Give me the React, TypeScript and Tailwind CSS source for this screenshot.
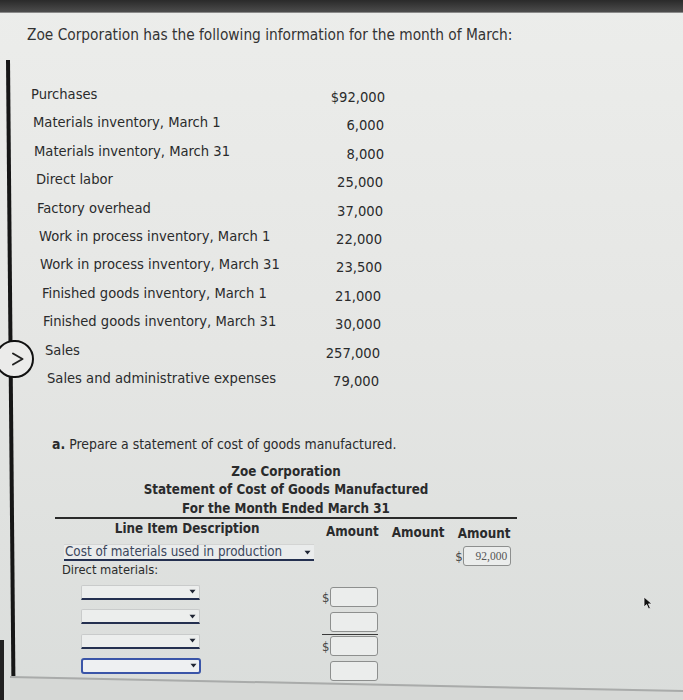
import React from "react";

// values column right edge drifts left a little, labels drift right (photo perspective)
const rows = [
  { label: "Purchases", value: "$92,000", pl: "pl-[31px]", vw: "w-[105px]" },
  { label: "Materials inventory, March 1", value: "6,000", pl: "pl-[33px]", vw: "w-[104px]" },
  { label: "Materials inventory, March 31", value: "8,000", pl: "pl-[34px]", vw: "w-[104px]" },
  { label: "Direct labor", value: "25,000", pl: "pl-[36px]", vw: "w-[103px]" },
  { label: "Factory overhead", value: "37,000", pl: "pl-[37px]", vw: "w-[103px]" },
  { label: "Work in process inventory, March 1", value: "22,000", pl: "pl-[39px]", vw: "w-[102px]" },
  { label: "Work in process inventory, March 31", value: "23,500", pl: "pl-[40px]", vw: "w-[102px]" },
  { label: "Finished goods inventory, March 1", value: "21,000", pl: "pl-[42px]", vw: "w-[101px]" },
  { label: "Finished goods inventory, March 31", value: "30,000", pl: "pl-[43px]", vw: "w-[101px]" },
  { label: "Sales", value: "257,000", pl: "pl-[45px]", vw: "w-[100px]" },
  { label: "Sales and administrative expenses", value: "79,000", pl: "pl-[47px]", vw: "w-[99px]" },
];

function Caret() {
  return (
    <svg width="7" height="5" viewBox="0 0 7 5" className="shrink-0">
      <path d="M0.5 0.8 L6.5 0.8 L3.5 4.4 Z" fill="#1f2533" />
    </svg>
  );
}

function EmptySelect({ focused }: { focused?: boolean }) {
  return (
    <div
      className={
        focused
          ? "flex h-[16px] w-[120px] items-center justify-end rounded-[3px] border-2 border-[#3a55a8] bg-[#eef0f2] pr-[2px]"
          : "flex h-[15px] w-[119px] items-center justify-end rounded-t-[2px] border border-b-2 border-[#c9cbcb] border-b-[#243050] bg-[#eceeed] pr-[3px]"
      }
    >
      <Caret />
    </div>
  );
}

function Box({ children }: { children?: React.ReactNode }) {
  return (
    <div className="flex h-[20px] w-[48px] items-center justify-end rounded-[3px] border-[1.5px] border-[#8d8f8e] bg-[#ebedec] pr-[3px] font-['Liberation_Serif',serif] text-[11.5px] text-[#555]">
      {children}
    </div>
  );
}

function Cursor() {
  return (
    <svg width="12" height="14" viewBox="0 0 12 14" className="absolute left-[643px] top-[596px]">
      <path d="M1 1 L1 11 L3.6 8.6 L5.6 13 L7.4 12.2 L5.5 7.9 L9 7.9 Z" fill="#111" stroke="#eee" strokeWidth="0.8" />
    </svg>
  );
}

export default function App() {
  return (
    <div className="relative h-[700px] w-[683px] overflow-hidden bg-gradient-to-b from-[#ecedeb] via-[#e5e6e4] to-[#dadddb] font-['DejaVu_Sans_Condensed','DejaVu_Sans',sans-serif] text-[#2a2b2c]">
      <div className="h-[13px] border-b border-[#8a8a8a] bg-gradient-to-b from-[#2a2a2a] to-[#4d4d4d]" />

      <p className="mt-[13px] pl-[27px] text-[15.3px] leading-[18px] text-[#333]">
        Zoe Corporation has the following information for the month of March:
      </p>

      <div className="mt-[41px] text-[14.6px]">
        {rows.map((r) => (
          <div key={r.label} className="flex h-[28.4px]">
            <div className={"w-[280px] leading-[17px] " + r.pl}>{r.label}</div>
            <div className={"pt-[3px] text-right leading-[17px] " + r.vw}>{r.value}</div>
          </div>
        ))}
      </div>

      <p className="mt-[39px] pl-[52px] text-[13.9px] leading-[16px]">
        <span className="font-bold">a.</span> Prepare a statement of cost of goods manufactured.
      </p>

      <div className="ml-[55px] mt-[11px] w-[462px] text-[13.3px]">
        <div className="text-center font-bold leading-[18px]">
          <div>Zoe Corporation</div>
          <div>Statement of Cost of Goods Manufactured</div>
          <div className="leading-[16px] pt-[2px]">For the Month Ended March 31</div>
        </div>
        <div className="h-[2px] bg-[#2a2a2a]" />

        <div className="flex pt-[2px] font-bold leading-[16px]">
          <div className="w-[265px] text-center">Line Item Description</div>
          <div className="w-[66px] pt-[3px] text-center">Amount</div>
          <div className="w-[66px] pt-[4px] text-center">Amount</div>
          <div className="w-[66px] pt-[5px] text-center">Amount</div>
        </div>

        <div className="mt-[2px] flex items-start">
          <div className="w-[265px] pl-[9px]">
            <div className="flex h-[17px] w-[250px] items-center justify-between border-t border-b-2 border-[#d3d4d3] border-b-[#243050] bg-[#eaecec] pr-[3px] text-[13.3px] leading-[14px] text-[#3a465c]">
              <span className="pl-[1px]">Cost of materials used in production</span>
              <Caret />
            </div>
          </div>
          <div className="w-[66px]" />
          <div className="w-[66px]" />
          <div className="flex w-[66px] items-center pt-[2px] pl-[4px]">
            <span className="w-[8px] text-[13px] text-[#444]">$</span>
            <Box>92,000</Box>
          </div>
        </div>

        <div className="mt-[-4px] pl-[7px] text-[12.8px] leading-[15px]">Direct materials:</div>

        <div className="mt-[5px] flex flex-col gap-[4.5px]">
          {[0, 1, 2, 3].map((i) => (
            <div key={i} className="flex h-[20px] items-center">
              <div className="w-[265px] pl-[26px]">
                <EmptySelect focused={i === 3} />
              </div>
              <div className="relative flex w-[66px] items-center pl-[2px] pt-[10px]">
                <span className="w-[8px] text-[13px] text-[#444]">{i === 0 || i === 2 ? "$" : ""}</span>
                <Box />
                {i === 1 && <div className="absolute left-[2px] top-[32px] h-[1.5px] w-[56px] bg-[#3a3a3a]" />}
              </div>
            </div>
          ))}
        </div>
      </div>

      <div className="absolute left-[6px] top-[60px] bottom-0 w-[4px] origin-top skew-x-[0.5deg] bg-[#161616]" />
      <div className="absolute left-0 top-[640px] bottom-0 w-[4px] bg-[#222]" />
      <div className="absolute left-[-5px] top-[340px] flex h-[38px] w-[39px] items-center justify-center rounded-full border-[2.5px] border-[#111] bg-[#ebebea]">
        <svg width="16" height="16" viewBox="0 0 16 16" className="ml-[6px]">
          <path d="M3 2.5 L12.5 8 L3 13.5" fill="none" stroke="#222" strokeWidth="2" strokeLinecap="round" strokeLinejoin="round" />
        </svg>
      </div>

      <div className="absolute left-[10px] right-0 top-[676px] h-[40px] origin-left skew-y-[1.2deg] border-t-2 border-[#a9abaa] bg-[#d6d8d6]" />

      <Cursor />
    </div>
  );
}
